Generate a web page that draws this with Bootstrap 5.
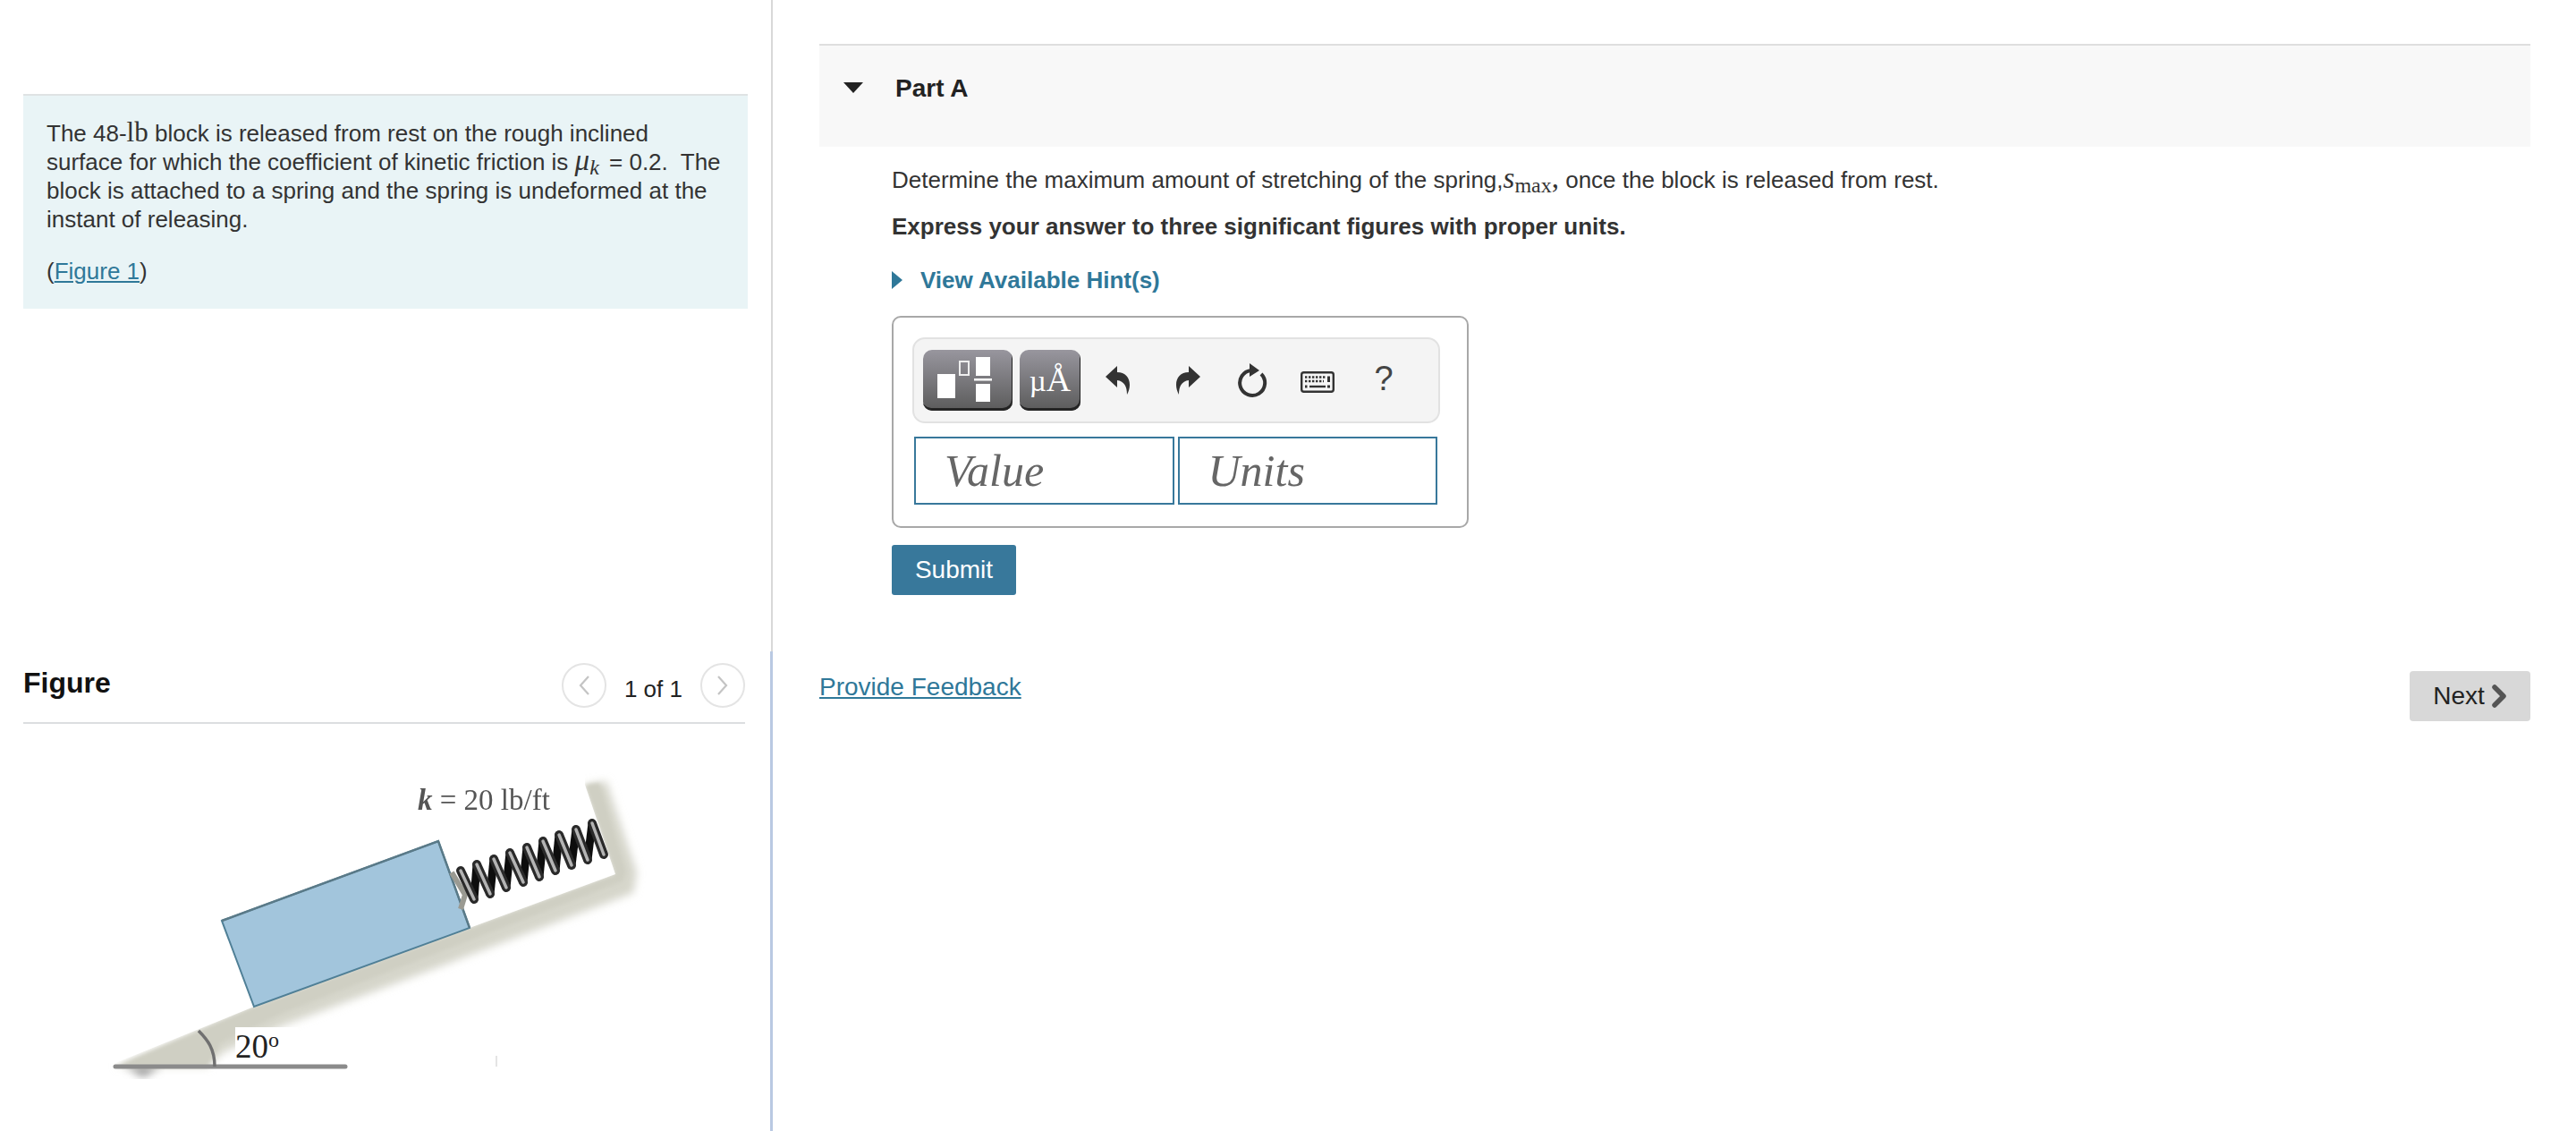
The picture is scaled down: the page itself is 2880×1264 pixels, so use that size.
<!DOCTYPE html>
<html lang="en">
<head>
<meta charset="utf-8">
<title>Part A</title>
<link href="https://cdn.jsdelivr.net/npm/bootstrap@5.3.0/dist/css/bootstrap.min.css" rel="stylesheet">
<style>
html,body{height:1264px;overflow:hidden;background:#fff}
body{font-family:"Liberation Sans",Arial,sans-serif;font-size:26px;line-height:32px;color:#333}
a{color:#2f7899}
.left-pane{width:864px;flex:none}
.left-top{height:728px;padding:105px 26px 0;border-right:2px solid #d8d8d8}
.left-bottom{height:536px;border-right:3px solid #b9c9e2}
.intro{background:#e9f4f6;border-top:2px solid #dfe3e4;padding:26px 26px 22px;height:240px}
.intro p{margin:0 0 26px}
.mth{font-family:"Liberation Serif",serif}
.mth-i{font-family:"Liberation Serif",serif;font-style:italic}
.mth-big{font-size:31px;line-height:26px}
.mth-mu{font-size:33px;line-height:26px}
.mth-sub{font-size:24px;vertical-align:-5px;line-height:0}
.mth-k{margin-right:4px}
.fig-head{height:81px;margin:0 28px 0 26px;border-bottom:2px solid #dcdee0}
.fig-title{font-size:32px;font-weight:700;color:#111;margin:0;padding-bottom:10px;line-height:36px}
.pager-btn{width:50px;height:50px;border:2px solid #e4e4e4;border-radius:50%;background:#fff;padding:0;display:flex;align-items:center;justify-content:center}
.pager{gap:20px;padding-bottom:3px}
.pager-txt{margin:8px 0 0;color:#222}
.fig-svg{display:block;width:861px;height:454px}
.right-pane{flex:1;padding:49px 51px 0 52px}
.part-head{background:#f8f8f8;border-top:2px solid #dedede;height:115px;padding:32px 0 0 27px;gap:36px;font-weight:700;color:#222;font-size:28px}
.part-tri{margin-top:9px;flex:none}
.part-body{padding:21px 0 0 81px}
.part-body p{margin:0}
.q-line{margin-bottom:20px!important;height:32px}
.hint-row{margin-top:28px;gap:20px;font-weight:700;color:#2f7899;height:32px}
.ans-box{width:645px;height:237px;margin-top:24px;border:2px solid #a8a8a8;border-radius:10px;padding:22px 30px 22px 21px}
.tool-bar{height:96px;background:#f4f4f4;border:2px solid #e2e2e2;border-radius:14px;padding:11px 10px;}
.tb-btn{height:68px;border:0;border-radius:10px;padding:0;background:linear-gradient(#98969e,#5b5b5b);box-shadow:inset -1px -3px 0 #242424;display:flex;align-items:center;justify-content:center;flex:none}
.tb-a{width:100px;margin-right:8px}
.tb-b{width:68px;color:#fff;font-family:"Liberation Serif",serif;font-size:38px;line-height:1;align-items:baseline;padding-top:14px}
.tb-mu{font-size:33px}
.tb-ico{flex:none;display:flex;align-items:center;justify-content:center;color:#333}
.tb-undo{margin-left:28px;width:28px}
.tb-redo{margin-left:50px;width:28px}
.tb-reset{margin-left:38px;width:40px}
.tb-kbd{margin-left:33px;width:40px;padding-top:4px}
.tb-q{margin-left:44px;width:20px;font-size:38px;font-weight:400;color:#444;padding-bottom:4px}
.val-row{gap:4px;margin:15px 3px 0 2px}
.val-in.form-control{flex:1;min-width:0;width:50%;height:76px;border:2px solid #38789b;border-radius:0;padding:0 32px;font-family:"Liberation Serif",serif;font-style:italic;font-size:50px;color:#666}
.val-in.form-control::placeholder{color:#666;opacity:1}
.sub-btn.btn{margin-top:19px;width:139px;height:56px;background:#38789b;border:0;border-radius:3px;color:#fff;font-size:28px;line-height:32px;padding:0}
.foot-row{margin-top:85px}
.next-btn.btn{width:135px;height:56px;background:#d8d8d8;border:0;border-radius:4px;color:#222;font-size:28px;line-height:32px;padding:0;gap:7px}
.feedback{font-size:28px;margin-top:2px}
</style>
</head>
<body>
<div class="d-flex">
  <div class="left-pane">
    <div class="left-top">
      <div class="intro">
        <p>The 48-<span class="mth mth-big">lb</span> block is released from rest on the rough inclined surface for which the coefficient of kinetic friction is <span class="mth-i mth-mu">μ</span><span class="mth-i mth-sub mth-k">k</span> = 0.2.&nbsp; The block is attached to a spring and the spring is undeformed at the instant of releasing.</p>
        <p>(<a href="#">Figure 1</a>)</p>
      </div>
    </div>
    <div class="left-bottom">
      <div class="fig-head d-flex justify-content-between align-items-center">
        <h2 class="fig-title">Figure</h2>
        <div class="pager d-flex align-items-center">
          <button class="pager-btn" type="button" aria-label="Previous"><svg width="14" height="24" viewBox="0 0 14 24"><path d="M12 2 3 12l9 10" fill="none" stroke="#c4c4c4" stroke-width="2.2"/></svg></button>
          <span class="pager-txt">1 of 1</span>
          <button class="pager-btn" type="button" aria-label="Next"><svg width="14" height="24" viewBox="0 0 14 24"><path d="M2 2l9 10-9 10" fill="none" stroke="#c4c4c4" stroke-width="2.2"/></svg></button>
        </div>
      </div>
      <svg class="fig-svg" viewBox="0 809 861 454" role="img" aria-label="Block on an incline attached to a spring">
        <defs>
          <filter id="soft" x="-10%" y="-10%" width="120%" height="120%"><feGaussianBlur stdDeviation="5"/></filter>
          <filter id="soft3" x="-10%" y="-10%" width="120%" height="120%"><feGaussianBlur stdDeviation="2"/></filter>
          <filter id="soft1" x="-10%" y="-10%" width="120%" height="120%"><feGaussianBlur stdDeviation="1.5"/></filter>
          <filter id="soft2" x="-10%" y="-10%" width="120%" height="120%"><feGaussianBlur stdDeviation="0.5"/></filter>
        </defs>
        <path d="M129 1192 284 1125 525 1037 688 977 654 877 678 873 712 975 708 998 440 1100 317 1146 250 1176 232 1192Z" fill="#d6d6cb" filter="url(#soft)"/>
        <path d="M129 1192 284 1125 525 1037 688 977 654 877 670 875 700 975 696 985 440 1084 317 1132 247 1165 232 1192Z" fill="#cfcfc3" filter="url(#soft3)"/>
        <path d="M140 1192H180L160 1204Z" fill="#999" filter="url(#soft)"/>
        <path d="M0 1188H129L284 1125 525 1037 688 977 654 877V815H0Z" fill="#fff"/>
        <rect x="263" y="1148" width="70" height="42" fill="#fff"/>
        <path d="M129 1192H386" stroke="#8b8b8b" stroke-width="5" stroke-linecap="round"/>
        <path d="M129 1192H190" stroke="#66665e" stroke-width="6" filter="url(#soft1)"/>
        <path d="M222 1152C232 1162 240 1172 240 1192" fill="none" stroke="#707070" stroke-width="3.5"/>
        <text x="263" y="1182" font-size="37" fill="#222" font-family="Liberation Serif">20<tspan font-size="24" dy="-12">o</tspan></text>
        <polygon points="248,1029 490,940 525,1037 284,1125" fill="#a2c5dc" stroke="#4f7f96" stroke-width="2"/>
        <path d="M248 1029 490 940 525 1037" fill="none" stroke="#5a7a88" stroke-width="2.5"/>
        <path d="M505 975 520 1000 515 1016" fill="none" stroke="#9a9a92" stroke-width="6"/>
        <g filter="url(#soft2)" fill="none" stroke-linecap="round">
          <path d="M530 1005 533 966M548 999 552 960M566 992 570 953M585 986 589 947M603 980 607 940M621 973 625 933M639 967 644 927M657 961 662 920" stroke="#111" stroke-width="9"/>
          <path d="M515 973 530 1005M533 966 548 999M552 960 566 992M570 953 585 986M589 947 603 980M607 940 621 973M625 933 639 967M644 927 657 961M662 920 675 955" stroke="#2a2a2a" stroke-width="10"/>
          <path d="M515 973 530 1005M533 966 548 999M552 960 566 992M570 953 585 986M589 947 603 980M607 940 621 973M625 933 639 967M644 927 657 961M662 920 675 955" stroke="#b4b4b4" stroke-width="3.5"/>
        </g>
        <text x="467" y="905" font-size="33" fill="#555" font-family="Liberation Serif" filter="url(#soft2)"><tspan font-style="italic" font-weight="700">k</tspan> = 20 lb/ft</text>
        <path d="M555 1180V1192" stroke="#e4e4e4" stroke-width="2"/>
      </svg>
    </div>
  </div>
  <div class="right-pane">
    <div class="part-head d-flex">
      <svg class="part-tri" width="22" height="12" viewBox="0 0 22 12"><path d="M0 0H22L11 12Z" fill="#222"/></svg>
      <span>Part A</span>
    </div>
    <div class="part-body">
      <p class="q-line">Determine the maximum amount of stretching of the spring,<span class="mth-i mth-mu">s</span><span class="mth mth-sub">max</span><span class="mth mth-mu">,</span> once the block is released from rest.</p>
      <p class="fw-bold">Express your answer to three significant figures with proper units.</p>
      <div class="hint-row d-flex align-items-center">
        <svg width="12" height="20" viewBox="0 0 12 20"><path d="M0 0 12 10 0 20Z" fill="#2f7899"/></svg>
        <span>View Available Hint(s)</span>
      </div>
      <div class="ans-box">
        <div class="tool-bar d-flex align-items-center">
          <button class="tb-btn tb-a" type="button" aria-label="Templates"><svg width="100" height="68" viewBox="0 0 100 68"><rect x="16" y="27" width="20" height="27" fill="#fff"/><rect x="41" y="13" width="10" height="15" fill="none" stroke="#eee" stroke-width="2"/><rect x="59" y="8" width="16" height="21" fill="#fff"/><rect x="57" y="32" width="20" height="2.5" fill="#fff"/><rect x="59" y="38" width="16" height="20" fill="#fff"/></svg></button>
          <button class="tb-btn tb-b" type="button"><span class="tb-mu">µ</span><span>Å</span></button>
          <span class="tb-ico tb-undo"><svg width="28" height="32" viewBox="0 0 28 32"><path d="M0 12 13 0V7C22 7 27 13 27 21 27 25 26 28 24 32 24 23 21 17 13 16V24Z" fill="#333"/></svg></span>
          <span class="tb-ico tb-redo"><svg width="28" height="32" viewBox="0 0 28 32"><path d="M28 12 15 0V7C6 7 1 13 1 21 1 25 2 28 4 32 4 23 7 17 15 16V24Z" fill="#333"/></svg></span>
          <span class="tb-ico tb-reset"><svg width="40" height="40" viewBox="0 0 40 40"><path d="M19 9A14 14 0 1 0 30 13" fill="none" stroke="#333" stroke-width="4"/><path d="M17 1 28 9 17 16Z" fill="#333"/></svg></span>
          <span class="tb-ico tb-kbd"><svg width="38" height="24" viewBox="0 0 38 24"><rect x="1.2" y="1.2" width="35.6" height="21.6" rx="2.5" fill="#fff" fill-opacity=".3" stroke="#333" stroke-width="2.4"/><path d="M5 6.5H28M5 11H26" stroke="#333" stroke-width="2.4" stroke-dasharray="2.4 1.6" fill="none"/><path d="M10 17H28" stroke="#333" stroke-width="2.4"/><path d="M30 5.5H33V12H30M5 15.5H7.5V18.5H5ZM30 15.5H33V18.5H30Z" fill="#333"/></svg></span>
          <span class="tb-ico tb-q">?</span>
        </div>
        <div class="val-row d-flex">
          <input class="val-in form-control" type="text" placeholder="Value" aria-label="Value">
          <input class="val-in form-control" type="text" placeholder="Units" aria-label="Units">
        </div>
      </div>
      <button class="sub-btn btn" type="button">Submit</button>
    </div>
    <div class="foot-row d-flex justify-content-between align-items-start">
      <a class="feedback" href="#">Provide Feedback</a>
      <button class="next-btn btn d-flex align-items-center justify-content-center" type="button">Next <svg width="18" height="26" viewBox="0 0 18 26"><path d="M4 3 14 13 4 23" fill="none" stroke="#555" stroke-width="5.5" stroke-linecap="round" stroke-linejoin="round"/></svg></button>
    </div>
  </div>
</div>
</body>
</html>
